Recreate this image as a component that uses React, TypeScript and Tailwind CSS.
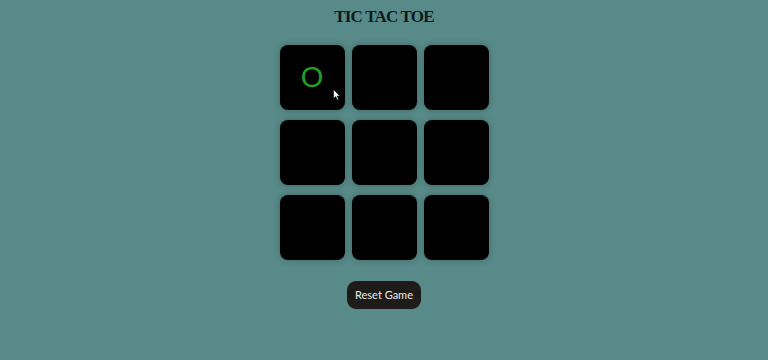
const cells: string[] = ["O", "", "", "", "", "", "", "", ""];

export default function App() {
  return (
    <div className="min-h-screen bg-[#578a88] flex flex-col items-center">
      <h1
        className="pt-[7px] text-[17px] leading-[20px] font-bold tracking-[-0.8px] text-[#0e1a1c]"
        style={{ fontFamily: '"Liberation Serif", "DejaVu Serif", serif' }}
      >
        TIC TAC TOE
      </h1>

      <div className="mt-[18px] grid grid-cols-[65px_65px_65px] gap-x-[7px] gap-y-[10px]">
        {cells.map((value, i) => (
          <div
            key={i}
            className="relative flex h-[65px] w-[65px] items-center justify-center rounded-[8px] bg-black shadow-[0_0_6px_rgba(0,0,0,0.25)]"
          >
            {value && (
              <span
                className="text-[29px] leading-none text-[#22a022]"
                style={{ fontFamily: '"Liberation Sans", Arial, sans-serif' }}
              >
                {value}
              </span>
            )}
            {i === 0 && (
              <svg
                className="absolute left-[53px] top-[44px]"
                width="8"
                height="12"
                viewBox="0 0 8 12"
              >
                <path
                  d="M0.5 0.5 L0.5 9.5 L2.6 7.6 L4.2 11 L5.6 10.4 L4 7.1 L7 7 Z"
                  fill="#ffffff"
                  stroke="#000000"
                  strokeWidth="0.6"
                />
              </svg>
            )}
          </div>
        ))}
      </div>

      <button
        type="button"
        className="mt-[21px] h-[28px] w-[74px] rounded-[9px] bg-[#1d1c19] text-[11px] text-[#ecebe6]"
        style={{ fontFamily: 'Lato, "Liberation Sans", sans-serif' }}
      >
        Reset Game
      </button>
    </div>
  );
}
